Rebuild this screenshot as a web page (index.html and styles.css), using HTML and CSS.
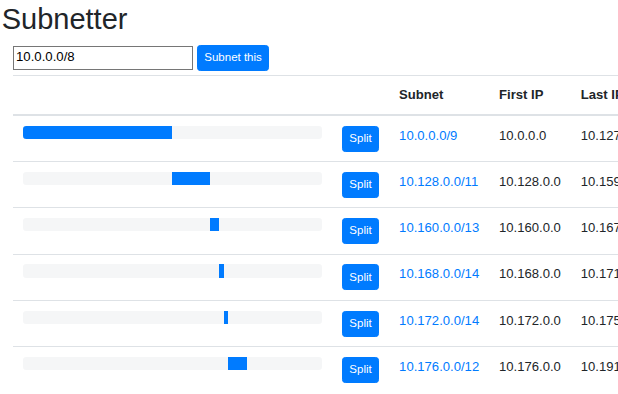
FILE: index.html
```html
<!DOCTYPE html>
<html lang="en">
<head>
<meta charset="utf-8">
<title>Subnetter</title>
<link rel="stylesheet" href="styles.css">
</head>
<body>
<h1 class="title">Subnetter</h1>
<div class="content">
  <form class="subnet-form">
    <input class="cidr-input" type="text" value="10.0.0.0/8">
    <button class="btn" type="button">Subnet this</button>
  </form>
  <div class="table-wrap">
    <table class="subnets">
      <thead>
        <tr>
          <th class="col-bar"></th>
          <th class="col-split"></th>
          <th>Subnet</th>
          <th>First IP</th>
          <th>Last IP</th>
          <th>Hosts</th>
        </tr>
      </thead>
      <tbody>
        <tr>
          <td class="col-bar"><div class="track"><div class="fill" style="margin-left:0%;width:50%"></div></div></td>
          <td class="col-split"><button class="btn" type="button">Split</button></td>
          <td><a class="link" href="#">10.0.0.0/9</a></td>
          <td>10.0.0.0</td>
          <td>10.127.255.255</td>
          <td>8388606</td>
        </tr>
        <tr>
          <td class="col-bar"><div class="track"><div class="fill" style="margin-left:50%;width:12.5%"></div></div></td>
          <td class="col-split"><button class="btn" type="button">Split</button></td>
          <td><a class="link" href="#">10.128.0.0/11</a></td>
          <td>10.128.0.0</td>
          <td>10.159.255.255</td>
          <td>2097150</td>
        </tr>
        <tr>
          <td class="col-bar"><div class="track"><div class="fill" style="margin-left:62.5%;width:3.125%"></div></div></td>
          <td class="col-split"><button class="btn" type="button">Split</button></td>
          <td><a class="link" href="#">10.160.0.0/13</a></td>
          <td>10.160.0.0</td>
          <td>10.167.255.255</td>
          <td>524286</td>
        </tr>
        <tr>
          <td class="col-bar"><div class="track"><div class="fill" style="margin-left:65.625%;width:1.5625%"></div></div></td>
          <td class="col-split"><button class="btn" type="button">Split</button></td>
          <td><a class="link" href="#">10.168.0.0/14</a></td>
          <td>10.168.0.0</td>
          <td>10.171.255.255</td>
          <td>262142</td>
        </tr>
        <tr>
          <td class="col-bar"><div class="track"><div class="fill" style="margin-left:67.1875%;width:1.5625%"></div></div></td>
          <td class="col-split"><button class="btn" type="button">Split</button></td>
          <td><a class="link" href="#">10.172.0.0/14</a></td>
          <td>10.172.0.0</td>
          <td>10.175.255.255</td>
          <td>262142</td>
        </tr>
        <tr>
          <td class="col-bar"><div class="track"><div class="fill" style="margin-left:68.75%;width:6.25%"></div></div></td>
          <td class="col-split"><button class="btn" type="button">Split</button></td>
          <td><a class="link" href="#">10.176.0.0/12</a></td>
          <td>10.176.0.0</td>
          <td>10.191.255.255</td>
          <td>1048574</td>
        </tr>
      </tbody>
    </table>
  </div>
</div>
</body>
</html>
```
FILE: styles.css
```css
html, body {
  margin: 0;
  padding: 0;
  overflow: hidden;
  background: #ffffff;
}

body {
  font-family: "Liberation Sans", Arial, sans-serif;
  font-size: 13.1px;
  line-height: 1.5;
  color: #212529;
}

.title {
  font-family: "Liberation Sans", Arial, sans-serif;
  font-size: 29px;
  font-weight: normal;
  line-height: 1.2;
  margin: 1.9px 0 0 1.7px;
}

.content {
  padding-left: 13px;
}

.subnet-form {
  display: flex;
  align-items: center;
  gap: 3.7px;
  margin: 8.3px 0 0 0;
}

.cidr-input {
  box-sizing: border-box;
  width: 180px;
  height: 24px;
  border: 1px solid #767676;
  border-radius: 0;
  padding: 0 2px 2px 2px;
  font-family: "Liberation Sans", Arial, sans-serif;
  font-size: 13.2px;
  color: #000000;
  background: #ffffff;
  outline: none;
}

.btn {
  background: #007bff;
  color: #ffffff;
  border: 0.827px solid #007bff;
  border-radius: 3.3px;
  font-family: "Liberation Sans", Arial, sans-serif;
  font-size: 11.5px;
  line-height: 17.37px;
  padding: 3.3px 6.6px;
  margin: 0;
  cursor: pointer;
}

.table-wrap {
  overflow: hidden;
  margin-top: 3.6px;
}

.subnets {
  border-collapse: collapse;
  width: 100%;
  white-space: nowrap;
}

.subnets th,
.subnets td {
  padding: 9.67px 9.92px;
  border-top: 1px solid #dee2e6;
  vertical-align: top;
  text-align: left;
  line-height: 19.85px;
}

.subnets thead th {
  padding-top: 9px;
  padding-bottom: 9.5px;
  vertical-align: bottom;
  border-bottom: 2px solid #dee2e6;
  font-weight: bold;
}

.subnets .col-bar {
  width: 299px;
}

.subnets .col-split {
  width: 38px;
}

.track {
  width: 299px;
  height: 13.2px;
  background: #f5f6f7;
  border-radius: 3.3px;
  overflow: hidden;
  display: flex;
}

.fill {
  height: 100%;
  background: #007bff;
}

.link {
  color: #007bff;
  text-decoration: none;
}
```
